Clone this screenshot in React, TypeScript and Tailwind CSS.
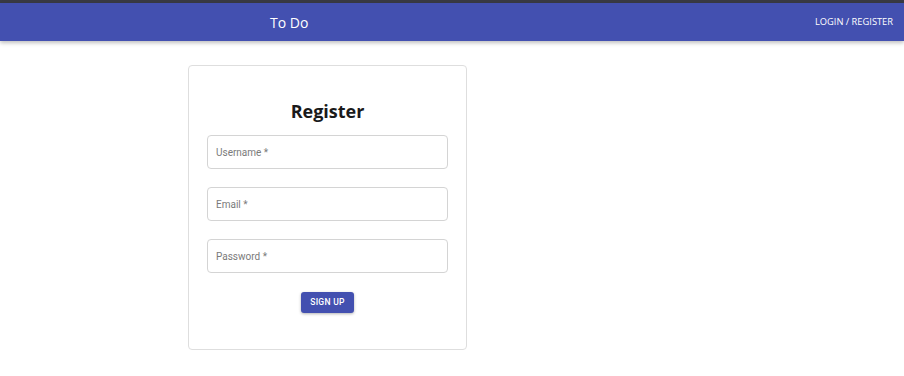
import React from 'react';

const fields = ['Username', 'Email', 'Password'];

export default function App() {
  return (
    <div className="min-h-[376px] w-full bg-white" style={{ fontFamily: 'Roboto, "Liberation Sans", sans-serif' }}>
      {/* window strip */}
      <div className="h-[3px] bg-[#393a44]" />

      {/* Navbar */}
      <header className="relative z-10 flex h-[38px] items-center justify-between bg-[#4350b0] pl-[270px] pr-[11px] shadow-[0_2px_4px_rgba(0,0,0,0.25)]">
        <span className="text-[14px] text-white" style={{ fontFamily: '"Open Sans", sans-serif' }}>To Do</span>
        <span className="text-[9.3px] text-white" style={{ fontFamily: '"Open Sans", sans-serif' }}>LOGIN / REGISTER</span>
      </header>

      {/* Content */}
      <main className="pl-[188px] pt-[24px]">
        <div className="flex h-[285px] w-[279px] flex-col items-center rounded-[4px] border border-[#dedede] px-[18px] pt-[32px]">
          <h1 className="text-[18px] font-bold leading-[26px] text-[#1a1a1a]" style={{ fontFamily: '"Open Sans", sans-serif' }}>Register</h1>
          <div className="mt-[11px] flex w-full flex-col gap-[18px]">
            {fields.map((f) => (
              <div key={f} className="flex h-[34px] w-full items-center rounded-[4px] border border-[#d4d4d4] pl-[8px]">
                <span className="text-[10px] text-[#7a7a7a]">{f} *</span>
              </div>
            ))}
          </div>
          <button className="mt-[19px] flex h-[21px] w-[53px] items-center justify-center rounded-[3px] bg-[#4350b0] text-[8.5px] font-medium tracking-[0.3px] text-white shadow-[0_1px_3px_rgba(0,0,0,0.3)]">
            SIGN UP
          </button>
        </div>
      </main>
    </div>
  );
}
